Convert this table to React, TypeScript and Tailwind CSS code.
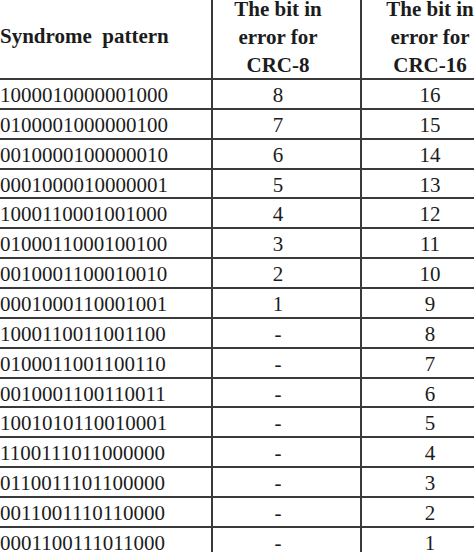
import React from 'react';

const rows = [
  { s: '1000010000001000', a: '8', b: '16' },
  { s: '0100001000000100', a: '7', b: '15' },
  { s: '0010000100000010', a: '6', b: '14' },
  { s: '0001000010000001', a: '5', b: '13' },
  { s: '1000110001001000', a: '4', b: '12' },
  { s: '0100011000100100', a: '3', b: '11' },
  { s: '0010001100010010', a: '2', b: '10' },
  { s: '0001000110001001', a: '1', b: '9' },
  { s: '1000110011001100', a: '-', b: '8' },
  { s: '0100011001100110', a: '-', b: '7' },
  { s: '0010001100110011', a: '-', b: '6' },
  { s: '1001010110010001', a: '-', b: '5' },
  { s: '1100111011000000', a: '-', b: '4' },
  { s: '0110011101100000', a: '-', b: '3' },
  { s: '0011001110110000', a: '-', b: '2' },
  { s: '0001100111011000', a: '-', b: '1' },
];

const App: React.FC = () => {
  return (
    <div className="w-[474px] h-[552px] overflow-hidden bg-white text-[#1c1c1c] text-[21px] leading-[28px] font-['Liberation_Serif','Times_New_Roman',serif]">
      {/* header */}
      <div className="flex h-[78px] overflow-hidden font-bold">
        <div className="w-[213px] shrink-0 border-r-2 border-[#3a3a3a] pt-[22px] whitespace-pre">
          Syndrome  pattern
        </div>
        <div className="w-[149px] shrink-0 border-r-2 border-[#3a3a3a] pr-[17px] text-center -mt-[5px]">
          <div>The bit in</div>
          <div>error for</div>
          <div>CRC-8</div>
        </div>
        <div className="w-[136px] shrink-0 text-center -mt-[5px] whitespace-nowrap">
          <div>The bit in</div>
          <div>error for</div>
          <div>CRC-16</div>
        </div>
      </div>

      {/* body */}
      {rows.map((r, i) => (
        <div key={i} className="flex h-[29.86px] border-t-2 border-[#3a3a3a]">
          <div className="w-[213px] shrink-0 border-r-2 border-[#3a3a3a] pt-[1px]">{r.s}</div>
          <div className="w-[149px] shrink-0 border-r-2 border-[#3a3a3a] pr-[17px] text-center pt-[1px]">{r.a}</div>
          <div className="w-[136px] shrink-0 text-center pt-[1px]">{r.b}</div>
        </div>
      ))}
    </div>
  );
};

export default App;
